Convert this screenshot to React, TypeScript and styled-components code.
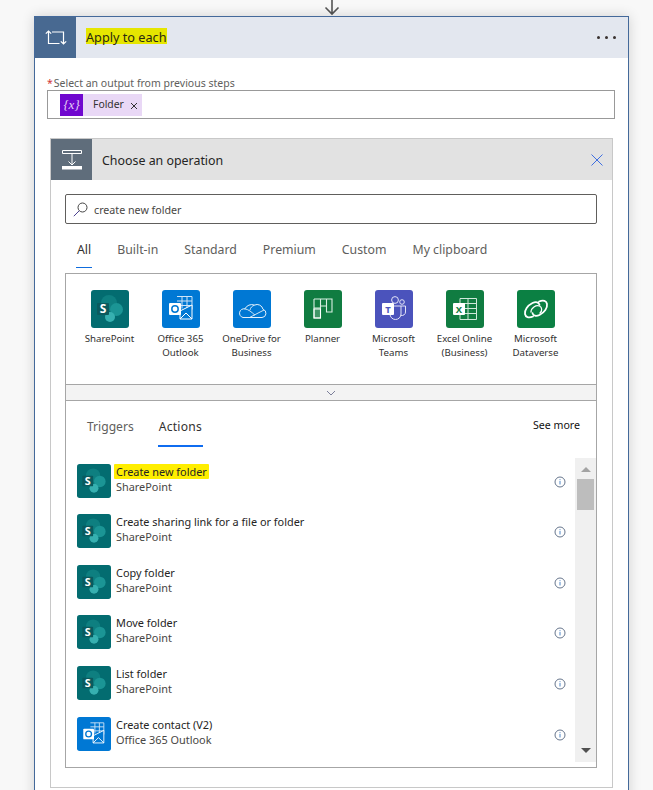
import styled, { createGlobalStyle } from "styled-components";

const FONT = `"Noto Sans", "Open Sans", sans-serif`;

const GlobalStyle = createGlobalStyle`
  html, body {
    margin: 0;
    height: 790px;
    overflow: hidden;
    background: #f8f8f8;
  }
  body {
    font-family: ${FONT};
    color: #252423;
  }
`;

const Page = styled.div`
  width: 653px;
  height: 790px;
  overflow: hidden;
  display: flex;
  flex-direction: column;
`;
const TopArrow = styled.div`
  height: 16px;
  padding-left: 323px;
  svg { display: block; }
`;
const Flow = styled.section`
  box-sizing: border-box;
  width: 595px;
  height: 800px;
  flex: none;
  margin-left: 34px;
  background: #fff;
  border: 1px solid #44699a;
  box-shadow: 0 0 12px rgba(0, 0, 0, 0.16);
`;
const Header = styled.header<{ $bg: string }>`
  height: 41px;
  background: ${(p) => p.$bg};
  display: flex;
  align-items: center;
`;
const HeaderIcon = styled.div<{ $bg: string }>`
  width: 41px;
  height: 41px;
  background: ${(p) => p.$bg};
  display: flex;
  align-items: center;
  justify-content: center;
`;
const LoopTitle = styled.span`
  margin: 0 0 4px 10px;
  height: 16px;
  font-size: 12.7px;
  line-height: 18px;
  background: #e6e600;
  color: #2a2a10;
`;
const More = styled.div`
  margin-left: auto;
  margin-right: 12px;
  display: flex;
  gap: 5px;
  i {
    width: 3px;
    height: 3px;
    border-radius: 50%;
    background: #3a3230;
  }
`;
const Body = styled.div`
  padding: 18px 13px 0 12px;
`;
const FieldLabel = styled.div`
  font-size: 10.5px;
  line-height: 14px;
  color: #605e5c;
  b {
    color: #d13438;
    font-weight: 400;
    margin-right: 1px;
  }
`;
const TokenField = styled.div`
  box-sizing: border-box;
  height: 29px;
  border: 1px solid #999;
  padding: 1px 12px;
`;
const Token = styled.div`
  display: inline-flex;
  height: 22px;
  background: #e9d8f6;
  align-items: center;
  font-size: 10.4px;
  color: #323130;
`;
const TokenIcon = styled.span`
  width: 23px;
  height: 22px;
  background: #7007cf;
  color: #e6d2f6;
  font-family: "Liberation Serif", serif;
  font-style: italic;
  font-size: 13px;
  display: flex;
  align-items: center;
  justify-content: center;
`;
const TokenText = styled.span`
  margin: 0 6px 2px 10px;
`;
const TokenRemove = styled.svg`
  margin: 2px 4px 0 0;
`;
const Scope = styled.section`
  box-sizing: border-box;
  width: 563px;
  height: 650px;
  margin: 19px 0 0 3px;
  border: 1px solid #c8c8c8;
`;
const ScopeTitle = styled.span`
  margin: 2px 0 0 10px;
  font-size: 12.4px;
  color: #252423;
`;
const CloseBtn = styled.div`
  margin-left: auto;
  margin-right: 9px;
  display: flex;
`;
const ScopeBody = styled.div`
  padding: 14px 15px 0 14px;
`;
const SearchBox = styled.div`
  box-sizing: border-box;
  height: 30px;
  border: 1px solid #605e5c;
  border-radius: 2px;
  display: flex;
  align-items: center;
  padding-left: 7px;
  gap: 6px;
  font-size: 10.7px;
  color: #484644;
`;
const SearchText = styled.span`
  margin-top: 2px;
`;
const Tabs = styled.nav`
  display: flex;
  height: 49px;
  padding-left: 12px;
  gap: 26px;
`;
const Tab = styled.div<{ $active?: boolean }>`
  position: relative;
  font-size: 12.3px;
  line-height: 18px;
  padding-top: 17px;
  color: ${(p) => (p.$active ? "#323130" : "#605e5c")};
  &::after {
    content: "";
    display: ${(p) => (p.$active ? "block" : "none")};
    position: absolute;
    left: -1px;
    right: -1px;
    top: 43px;
    height: 1px;
    background: #0f6cdd;
  }
`;
const Results = styled.div`
  box-sizing: border-box;
  height: 495px;
  border: 1px solid #a6a6a6;
`;
const Connectors = styled.div`
  box-sizing: border-box;
  height: 110px;
  padding: 16px 0 0 8px;
  display: flex;
`;
const Connector = styled.div`
  width: 71px;
  display: flex;
  flex-direction: column;
  align-items: center;
  font-size: 9.7px;
  line-height: 14px;
  text-align: center;
  color: #323130;
  svg {
    display: block;
    margin-bottom: 4px;
  }
`;
const Collapse = styled.div`
  box-sizing: border-box;
  height: 17px;
  background: #f3f3f3;
  border-top: 1px solid #a6a6a6;
  border-bottom: 1px solid #a6a6a6;
  display: flex;
  align-items: center;
  justify-content: center;
`;
const SubTabs = styled.div`
  box-sizing: border-box;
  height: 57px;
  display: flex;
  padding: 0 16px 0 21px;
  gap: 25px;
`;
const SubTab = styled.div<{ $active?: boolean }>`
  position: relative;
  height: 30px;
  font-size: 12.1px;
  line-height: 18px;
  padding-top: 17px;
  letter-spacing: ${(p) => (p.$active ? "0.25px" : "0")};
  color: ${(p) => (p.$active ? "#323130" : "#605e5c")};
  &::after {
    content: "";
    display: ${(p) => (p.$active ? "block" : "none")};
    position: absolute;
    left: -1px;
    right: -1px;
    top: 44px;
    height: 2px;
    background: #0f6cf0;
  }
`;
const SeeMore = styled.div`
  margin-left: auto;
  font-size: 10.6px;
  line-height: 16px;
  padding-top: 16px;
  color: #111;
`;
const ListArea = styled.div`
  position: relative;
  height: 309px;
  display: flex;
`;
const ActionList = styled.div`
  flex: 1;
  padding: 5.8px 0 0 11px;
`;
const ActionRow = styled.div`
  height: 50.55px;
  display: flex;
`;
const ActionText = styled.div`
  margin-left: 5px;
  flex: 1;
  font-size: 10.9px;
  line-height: 15px;
  color: #252423;
`;
const ActionTitle = styled.div<{ $mark?: boolean }>`
  width: fit-content;
  margin-left: -2px;
  padding: 0 2px;
  border-radius: 1px;
  background: ${(p) => (p.$mark ? "#ffee00" : "transparent")};
`;
const ActionSub = styled.div`
  color: #484644;
`;
const InfoIcon = styled.div`
  margin: 12px 9px 0 0;
  display: flex;
  height: 12px;
`;
const ScrollBar = styled.div`
  width: 21px;
  height: 304px;
  background: #f0f0f0;
  display: flex;
  flex-direction: column;
  align-items: center;
  padding-top: 9px;
  box-sizing: border-box;
`;
const Thumb = styled.div`
  width: 17px;
  height: 31px;
  margin-top: 7px;
  background: #bdbdbd;
`;
const ArrowUp = styled.div`
  width: 0;
  height: 0;
  border-left: 5px solid transparent;
  border-right: 5px solid transparent;
  border-bottom: 5px solid #a3a3a3;
`;
const ArrowDown = styled.div`
  width: 0;
  height: 0;
  margin-top: auto;
  margin-bottom: 9px;
  border-left: 5px solid transparent;
  border-right: 5px solid transparent;
  border-top: 5px solid #505050;
`;

type Kind = "sharepoint" | "outlook" | "onedrive" | "planner" | "teams" | "excel" | "dataverse";

const BG: Record<Kind, string> = {
  sharepoint: "#036c70",
  outlook: "#0078d4",
  onedrive: "#0078d4",
  planner: "#107c41",
  teams: "#4b53bc",
  excel: "#107c41",
  dataverse: "#0b8043",
};

const Glyph = ({ kind }: { kind: Kind }) => {
  switch (kind) {
    case "sharepoint":
      return (
        <>
          <circle cx="18" cy="13" r="8" fill="#0e7f80" />
          <circle cx="25.5" cy="19.5" r="6.5" fill="#1b9595" />
          <circle cx="19" cy="27" r="5" fill="#36b0b0" />
          <rect x="6" y="13" width="12" height="12" rx="1" fill="#0a5a5e" />
          <text x="12" y="23.2" fontSize="12" fontWeight="700" fill="#fff" textAnchor="middle" fontFamily="Noto Sans">S</text>
        </>
      );
    case "outlook":
      return (
        <>
          <path d="M15 6.5h15v13M20 6.5v12M25 6.5v12M15 11h15M15 15.5h15" fill="none" stroke="#cfe4f7" strokeWidth="1" />
          <path d="M18 21l12-6v14H18z" fill="#0078d4" stroke="#fff" strokeWidth="1" />
          <path d="M18 29l6-6 6 6" fill="none" stroke="#fff" strokeWidth="1" />
          <rect x="7" y="13" width="12" height="12" rx="1" fill="#fff" />
          <circle cx="13" cy="19" r="3.2" fill="none" stroke="#0078d4" strokeWidth="1.5" />
        </>
      );
    case "onedrive":
      return (
        <>
          <path d="M10 27.5h19a4.2 4.2 0 0 0 1-8.2 6 6 0 0 0-8.5-4.2 7.6 7.6 0 0 0-9.6 3.8A4.4 4.4 0 0 0 10 27.5z" fill="none" stroke="#e6f2fb" strokeWidth="1" />
          <path d="M11.5 18.8c4 .6 7 3 10.5 6.5M21.5 15.1c-2.500 1-4 2.500-4.500 4.900M31 20l-14.500 7.500" fill="none" stroke="#e6f2fb" strokeWidth="0.9" />
        </>
      );
    case "planner":
      return (
        <>
          <path d="M10 9h18v13h-5.500v-13M16.500 9v19H10V9M10 18h6.500M22.500 9v7h-6" fill="none" stroke="#d9efe3" strokeWidth="1.1" />
          <rect x="10" y="19" width="6.500" height="9" fill="#ffffff33" stroke="#fff" strokeWidth="1" />
        </>
      );
    case "teams":
      return (
        <>
          <circle cx="20" cy="10" r="3.400" fill="none" stroke="#e3e4f7" strokeWidth="1" />
          <circle cx="27" cy="12" r="2.300" fill="none" stroke="#e3e4f7" strokeWidth="1" />
          <path d="M15 16h11v8a5.500 5.500 0 0 1-11 0zM26 16h4.500v6a3.500 3.500 0 0 1-4.700 3.300" fill="none" stroke="#e3e4f7" strokeWidth="1" />
          <rect x="7" y="13" width="12" height="12" rx="1" fill="#fff" />
          <text x="13" y="22.500" fontSize="9.500" fontWeight="700" fill="#4b53bc" textAnchor="middle" fontFamily="Noto Sans">T</text>
        </>
      );
    case "excel":
      return (
        <>
          <path d="M14 8.500h16.500v21H14M14 8.500v21M22 8.500v21M18 13.500h12.500M18 18.500h12.500M18 23.500h12.500" fill="none" stroke="#cfe8da" strokeWidth="1" />
          <rect x="7" y="13" width="12" height="12" rx="1" fill="#fff" />
          <text x="13" y="22.500" fontSize="9.500" fontWeight="700" fill="#107c41" textAnchor="middle" fontFamily="Noto Sans">X</text>
        </>
      );
    case "dataverse":
      return (
        <>
          <path d="M22 11.500c4.500 -1.800 7.500 -.5 8 2.500 .6 4 -2.500 8.500 -7.500 11 -3.500 1.700 -6.500 .8 -7 -1.800M16 26.500c-4.500 1.800 -7.500 .5 -8 -2.500 -.6 -4 2.500 -8.500 7.500 -11 3.500 -1.700 6.500 -.8 7 1.800" fill="none" stroke="#fff" strokeWidth="1.800" strokeLinecap="round" />
          <path d="M14 22c0-4 5-7.500 8.500-6 2.800 1.200 2.800 5 .5 7" fill="none" stroke="#fff" strokeWidth="1.300" strokeLinecap="round" />
        </>
      );
  }
};

const ConnectorIcon = ({ kind, size }: { kind: Kind; size: number }) => (
  <svg width={size} height={size} viewBox="0 0 38 38">
    <rect width="38" height="38" rx="3" fill={BG[kind]} />
    <Glyph kind={kind} />
  </svg>
);

const Info = () => (
  <svg width="12" height="12" viewBox="0 0 12 12">
    <circle cx="6" cy="6" r="5" fill="none" stroke="#66758c" strokeWidth="1" />
    <path d="M6 5v3.500" stroke="#4f86c6" strokeWidth="1" />
    <path d="M6 3.200v1" stroke="#4f86c6" strokeWidth="1" />
  </svg>
);

const connectors: { kind: Kind; label: string[] }[] = [
  { kind: "sharepoint", label: ["SharePoint"] },
  { kind: "outlook", label: ["Office 365", "Outlook"] },
  { kind: "onedrive", label: ["OneDrive for", "Business"] },
  { kind: "planner", label: ["Planner"] },
  { kind: "teams", label: ["Microsoft", "Teams"] },
  { kind: "excel", label: ["Excel Online", "(Business)"] },
  { kind: "dataverse", label: ["Microsoft", "Dataverse"] },
];

const actions: { kind: Kind; title: string; sub: string; mark?: boolean }[] = [
  { kind: "sharepoint", title: "Create new folder", sub: "SharePoint", mark: true },
  { kind: "sharepoint", title: "Create sharing link for a file or folder", sub: "SharePoint" },
  { kind: "sharepoint", title: "Copy folder", sub: "SharePoint" },
  { kind: "sharepoint", title: "Move folder", sub: "SharePoint" },
  { kind: "sharepoint", title: "List folder", sub: "SharePoint" },
  { kind: "outlook", title: "Create contact (V2)", sub: "Office 365 Outlook" },
];

const tabs = ["All", "Built-in", "Standard", "Premium", "Custom", "My clipboard"];

const App = () => (
  <Page>
    <GlobalStyle />
    <TopArrow>
      <svg width="18" height="16" viewBox="0 0 18 16">
        <path d="M9 0v14M2.500 7.500L9 14l6.500-6.500" fill="none" stroke="#555" strokeWidth="1.600" />
      </svg>
    </TopArrow>
    <Flow>
      <Header $bg="#e3e7ef">
        <HeaderIcon $bg="#486991">
          <svg width="22" height="16" viewBox="0 0 22 16">
            <path d="M3.500 1v12.500h11M.8 3.700L3.500 1l2.700 2.700M7 2h11.500v12M15.800 11.300l2.700 2.700 2.700-2.700" fill="none" stroke="#fff" strokeWidth="1.200" />
          </svg>
        </HeaderIcon>
        <LoopTitle>Apply to each</LoopTitle>
        <More>
          <i />
          <i />
          <i />
        </More>
      </Header>
      <Body>
        <FieldLabel>
          <b>*</b>Select an output from previous steps
        </FieldLabel>
        <TokenField>
          <Token>
            <TokenIcon>{"{x}"}</TokenIcon>
            <TokenText>Folder</TokenText>
            <TokenRemove width="8" height="8" viewBox="0 0 8 8">
              <path d="M1 1l6 6M7 1L1 7" stroke="#333" strokeWidth="1" />
            </TokenRemove>
          </Token>
        </TokenField>
        <Scope>
          <Header $bg="#e2e2e2">
            <HeaderIcon $bg="#5f6d7b">
              <svg width="22" height="22" viewBox="0 0 22 22">
                <path d="M1.500 1.500h19v3h-19zM11 4.500v11M7.500 12.500L11 16l3.500-3.500" fill="none" stroke="#fff" strokeWidth="1" />
                <rect x="1" y="17" width="20" height="3.500" fill="#fff" />
              </svg>
            </HeaderIcon>
            <ScopeTitle>Choose an operation</ScopeTitle>
            <CloseBtn>
              <svg width="12" height="12" viewBox="0 0 12 12">
                <path d="M.5.500l11 11M11.500.500l-11 11" stroke="#3f6fe0" strokeWidth="1" />
              </svg>
            </CloseBtn>
          </Header>
          <ScopeBody>
            <SearchBox>
              <svg width="15" height="15" viewBox="0 0 15 15">
                <circle cx="9.500" cy="5.500" r="4.500" fill="none" stroke="#444" strokeWidth="1" />
                <path d="M6.200 8.800L.8 14.200" stroke="#4a3f8f" strokeWidth="1" />
              </svg>
              <SearchText>create new folder</SearchText>
            </SearchBox>
            <Tabs>
              {tabs.map((t, i) => (
                <Tab key={t} $active={i === 0}>
                  {t}
                </Tab>
              ))}
            </Tabs>
            <Results>
              <Connectors>
                {connectors.map((c) => (
                  <Connector key={c.kind}>
                    <ConnectorIcon kind={c.kind} size={38} />
                    {c.label.map((l) => (
                      <div key={l}>{l}</div>
                    ))}
                  </Connector>
                ))}
              </Connectors>
              <Collapse>
                <svg width="10" height="6" viewBox="0 0 10 6">
                  <path d="M1 1l4 4 4-4" fill="none" stroke="#7c7f9a" strokeWidth="1" />
                </svg>
              </Collapse>
              <SubTabs>
                <SubTab>Triggers</SubTab>
                <SubTab $active>Actions</SubTab>
                <SeeMore>See more</SeeMore>
              </SubTabs>
              <ListArea>
                <ActionList>
                  {actions.map((a) => (
                    <ActionRow key={a.title}>
                      <ConnectorIcon kind={a.kind} size={34} />
                      <ActionText>
                        <ActionTitle $mark={a.mark}>{a.title}</ActionTitle>
                        <ActionSub>{a.sub}</ActionSub>
                      </ActionText>
                      <InfoIcon>
                        <Info />
                      </InfoIcon>
                    </ActionRow>
                  ))}
                </ActionList>
                <ScrollBar>
                  <ArrowUp />
                  <Thumb />
                  <ArrowDown />
                </ScrollBar>
              </ListArea>
            </Results>
          </ScopeBody>
        </Scope>
      </Body>
    </Flow>
  </Page>
);

export default App;
